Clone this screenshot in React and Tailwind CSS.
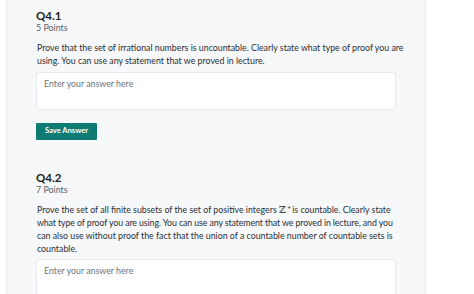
export default function App() {
  const font = { fontFamily: "Lato, 'Open Sans', sans-serif" };
  const jl = "whitespace-nowrap text-justify [text-align-last:justify]";
  return (
    <div className="w-[474px] h-[294px] overflow-hidden bg-white pl-[6px]" style={font}>
      <div className="w-[420px] h-[294px] bg-[#f7f8fa] border-x border-[#e9eaed] pl-[29px] pr-[29px] pt-[9px]">
        <div className="text-[11.5px] font-bold text-[#1d2125] leading-[13px]">Q4.1</div>
        <div className="text-[8.9px] text-[#5b6068] leading-[12px]">5 Points</div>
        <div className="text-[8.8px] leading-[13.3px] text-[#2a2e33] mt-[7px] pl-[1px]">
          <div className={`${jl} w-[355px]`}>Prove that the set of irrational numbers is uncountable. Clearly state what type of proof you are</div>
          <div className="whitespace-nowrap">using. You can use any statement that we proved in lecture.</div>
        </div>
        <div className="mt-[4px] h-[38px] bg-white border border-[#e8e9ec] rounded-[2px] px-[7px] pt-[5px] text-[8.8px] leading-[12px] text-[#6f737a]">
          Enter your answer here
        </div>
        <button className="mt-[13px] h-[17px] w-[61px] bg-[#0f7c74] rounded-[1px] text-white text-[7.6px] font-bold flex items-center justify-center">
          Save Answer
        </button>
        <div className="mt-[31px] text-[11.5px] font-bold text-[#1d2125] leading-[13px]">Q4.2</div>
        <div className="text-[8.9px] text-[#5b6068] leading-[12px]">7 Points</div>
        <div className="text-[8.8px] leading-[13px] text-[#2a2e33] mt-[7px] pl-[1px]">
          <div className={`${jl} w-[346px]`}>
            Prove the set of all finite subsets of the set of positive integers{" "}
            <span className="relative inline-block leading-[0] pr-[4px]">
              <span style={{ fontFamily: "'DejaVu Serif', serif" }} className="text-[9.5px]">ℤ</span>
              <span className="absolute right-[-1px] top-[-6px] text-[6.5px] leading-[7px]">+</span>
            </span>{" "}
            is countable. Clearly state
          </div>
          <div className={`${jl} w-[355px] tracking-[-0.1px]`}>what type of proof you are using. You can use any statement that we proved in lecture, and you</div>
          <div className={`${jl} w-[346px]`}>can also use without proof the fact that the union of a countable number of countable sets is</div>
          <div className="whitespace-nowrap">countable.</div>
        </div>
        <div className="mt-[4px] h-[38px] bg-white border border-[#e8e9ec] rounded-[2px] px-[7px] pt-[5px] text-[8.8px] leading-[12px] text-[#6f737a]">
          Enter your answer here
        </div>
      </div>
    </div>
  );
}
